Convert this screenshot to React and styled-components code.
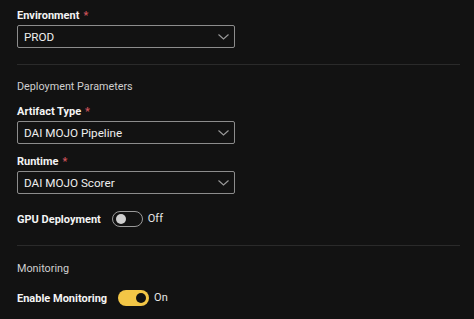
import React from 'react';
import styled, { createGlobalStyle } from 'styled-components';

const Global = createGlobalStyle`
  html, body {
    margin: 0;
    background: #121212;
  }
  body {
    font-family: Roboto, Inter, sans-serif;
    color: #f2f2f2;
  }
`;

const Page = styled.div`
  padding: 8px 14px 0 17px;
  display: flex;
  flex-direction: column;
`;

const Field = styled.div`
  display: flex;
  flex-direction: column;
  gap: 2px;
  margin-bottom: ${p => p.$mb || 0}px;
`;

const Label = styled.label`
  font-size: 11px;
  font-weight: 700;
  color: #f4f4f4;
  line-height: 15px;
`;

const Req = styled.span`
  color: #d0545c;
  margin-left: 4px;
  font-weight: 500;
`;

const SelectBox = styled.div`
  width: 218px;
  height: 23px;
  box-sizing: border-box;
  border: 1px solid #8c8c8c;
  border-radius: 2px;
  display: flex;
  align-items: center;
  justify-content: space-between;
  padding: 0 5px 0 6px;
  font-size: 11.7px;
  color: #eeeeee;
`;

const Divider = styled.hr`
  border: 0;
  border-top: 1px solid #2a2a2a;
  margin: ${p => p.$m};
  width: 443px;
`;

const Section = styled.div`
  font-size: 10.8px;
  color: #cfcfcf;
  line-height: 16px;
  margin-bottom: ${p => p.$mb}px;
`;

const ToggleRow = styled.div`
  display: flex;
  align-items: center;
  gap: 11px;
  line-height: 16px;
`;

const Switch = styled.span`
  display: flex;
  align-items: center;
  gap: 5px;
`;

const Track = styled.span`
  width: 31px;
  height: 16px;
  box-sizing: border-box;
  border-radius: 8px;
  border: ${p => (p.$on ? 'none' : '1px solid #9a9a9a')};
  background: ${p => (p.$on ? '#f3c646' : 'transparent')};
  display: flex;
  align-items: center;
  justify-content: ${p => (p.$on ? 'flex-end' : 'flex-start')};
  padding: 0 3px;
`;

const Knob = styled.span`
  width: 10px;
  height: 10px;
  border-radius: 50%;
  background: ${p => (p.$on ? '#111' : '#cfcfcf')};
`;

const State = styled.span`
  font-size: 11px;
  color: #e6e6e6;
`;

function Chevron() {
  return (
    <svg width="11" height="6" viewBox="0 0 11 6" fill="none">
      <path d="M0.5 0.5 L5.5 5 L10.5 0.5" stroke="#9a9a9a" strokeWidth="1.1" />
    </svg>
  );
}

function Select({ value }) {
  return (
    <SelectBox>
      <span>{value}</span>
      <Chevron />
    </SelectBox>
  );
}

function Toggle({ label, on }) {
  return (
    <ToggleRow>
      <Label as="span">{label}</Label>
      <Switch>
        <Track $on={on}>
          <Knob $on={on} />
        </Track>
        <State>{on ? 'On' : 'Off'}</State>
      </Switch>
    </ToggleRow>
  );
}

export default function App() {
  return (
    <>
      <Global />
      <Page>
        <Field>
          <Label>
            Environment<Req>*</Req>
          </Label>
          <Select value="PROD" />
        </Field>
        <Divider $m="16px 0 14px" />
        <Section $mb={9}>Deployment Parameters</Section>
        <Field $mb={10}>
          <Label>
            Artifact Type<Req>*</Req>
          </Label>
          <Select value="DAI MOJO Pipeline" />
        </Field>
        <Field $mb={17}>
          <Label>
            Runtime<Req>*</Req>
          </Label>
          <Select value="DAI MOJO Scorer" />
        </Field>
        <Toggle label="GPU Deployment" on={false} />
        <Divider $m="18px 0 15px" />
        <Section $mb={13}>Monitoring</Section>
        <Toggle label="Enable Monitoring" on />
      </Page>
    </>
  );
}
